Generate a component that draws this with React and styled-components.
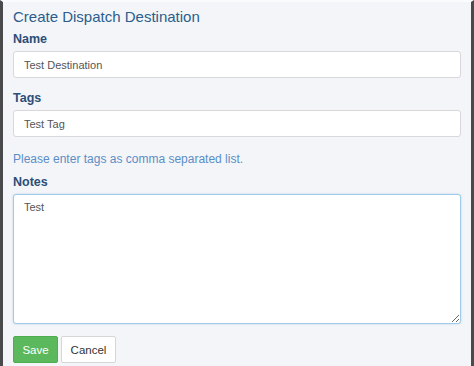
import React from "react";
import styled, { createGlobalStyle } from "styled-components";

const Global = createGlobalStyle`
  html, body { margin: 0; padding: 0; background: #f4f5f8; }
  body { font-family: "Liberation Sans", Arial, sans-serif; }
`;

const Frame = styled.div`
  width: 474px;
  height: 366px;
  box-sizing: border-box;
  border-left: 3px solid #4a4a4c;
  border-right: 3px solid #4a4a4c;
  border-top: 2px solid #fafbfc;
  background: #f4f5f8;
  overflow: hidden;
`;

const Form = styled.form`
  display: flex;
  flex-direction: column;
  padding: 6px 10px 0 10px;
`;

const Title = styled.h3`
  margin: 0 0 6px;
  font-size: 15px;
  font-weight: normal;
  color: #2b5e8e;
  line-height: 18px;
`;

const Label = styled.label`
  font-size: 12.5px;
  font-weight: bold;
  color: #2c4f78;
  line-height: 15px;
  margin-bottom: 4px;
`;

const Input = styled.input`
  box-sizing: border-box;
  width: 448px;
  height: 27px;
  padding: 0 10px;
  border: 1px solid #d8d8da;
  border-radius: 3px;
  background: #fff;
  font-family: inherit;
  font-size: 11px;
  color: #555;
  margin-bottom: ${(p) => p.$mb || 13}px;
  outline: none;
`;

const Help = styled.p`
  margin: 0 0 9px;
  font-size: 12px;
  color: #5b8ec7;
  line-height: 14px;
`;

const TextArea = styled.textarea`
  box-sizing: border-box;
  width: 448px;
  height: 130px;
  padding: 6px 10px;
  border: 1px solid #9fcbe6;
  border-radius: 3px;
  box-shadow: 0 0 2px rgba(120, 180, 220, 0.5);
  background: #fff;
  font-family: inherit;
  font-size: 11px;
  color: #555;
  resize: both;
  outline: none;
  margin-bottom: 12px;
`;

const Buttons = styled.div`
  display: flex;
  gap: 3px;
`;

const Button = styled.button`
  box-sizing: border-box;
  height: 27px;
  width: ${(p) => p.$w}px;
  padding: 0;
  border-radius: 2px;
  font-family: inherit;
  font-size: 11.5px;
  border: 1px solid ${(p) => (p.$primary ? "#4cae4c" : "#d6d6d6")};
  background: ${(p) => (p.$primary ? "#5cb85c" : "#fff")};
  color: ${(p) => (p.$primary ? "#fff" : "#333")};
`;

export default function App() {
  return (
    <>
      <Global />
      <Frame>
        <Form onSubmit={(e) => e.preventDefault()}>
          <Title>Create Dispatch Destination</Title>
          <Label>Name</Label>
          <Input defaultValue="Test Destination" />
          <Label>Tags</Label>
          <Input $mb={15} defaultValue="Test Tag" />
          <Help>Please enter tags as comma separated list.</Help>
          <Label>Notes</Label>
          <TextArea defaultValue="Test" />
          <Buttons>
            <Button $primary $w={45} type="button">Save</Button>
            <Button $w={55} type="button">Cancel</Button>
          </Buttons>
        </Form>
      </Frame>
    </>
  );
}
